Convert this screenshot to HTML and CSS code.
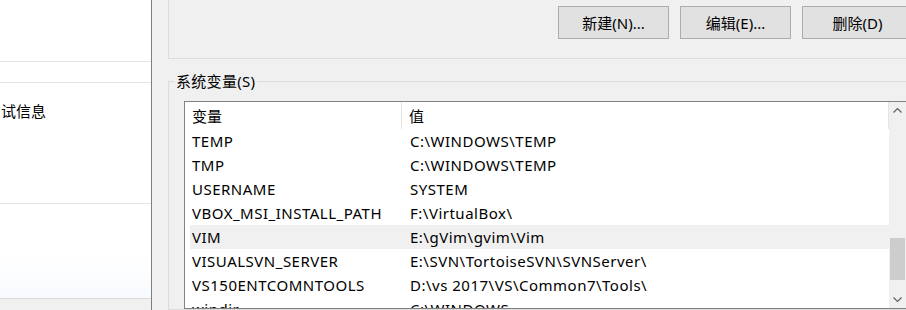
FILE: index.html
```html
<!DOCTYPE html>
<html lang="zh-CN">
<head>
    <meta charset="UTF-8">
    <title>环境变量</title>
    <link rel="stylesheet" href="styles.css">
</head>
<body>

    <div class="side">
        <div class="side-row first"></div>
        <div class="side-row second"></div>
        <div class="side-row third">试信息</div>
        <div class="side-row fourth"></div>
        <div class="side-foot"></div>
    </div>

    <div class="dialog">
        <div class="group user-group">
            <div class="buttons">
                <button class="btn">新建(N)...</button>
                <button class="btn">编辑(E)...</button>
                <button class="btn">删除(D)</button>
            </div>
        </div>

        <fieldset class="group sys-group">
            <legend>系统变量(S)</legend>
            <div class="listbox">
                <div class="list">
                    <div class="list-head">
                        <div class="col name">变量</div>
                        <div class="col value">值</div>
                    </div>
                    <div class="list-body">
                        <div class="item"><span>TEMP</span><span>C:\WINDOWS\TEMP</span></div>
                        <div class="item"><span>TMP</span><span>C:\WINDOWS\TEMP</span></div>
                        <div class="item"><span>USERNAME</span><span>SYSTEM</span></div>
                        <div class="item"><span>VBOX_MSI_INSTALL_PATH</span><span>F:\VirtualBox\</span></div>
                        <div class="item hover"><span>VIM</span><span>E:\gVim\gvim\Vim</span></div>
                        <div class="item"><span>VISUALSVN_SERVER</span><span>E:\SVN\TortoiseSVN\SVNServer\</span></div>
                        <div class="item"><span>VS150ENTCOMNTOOLS</span><span>D:\vs 2017\VS\Common7\Tools\</span></div>
                        <div class="item"><span>windir</span><span>C:\WINDOWS</span></div>
                    </div>
                </div>
                <div class="scrollbar">
                    <svg class="arrow" width="17" height="17" viewBox="0 0 17 17"><polyline points="4.5,10.5 8.5,6.5 12.5,10.5" fill="none" stroke="#606060" stroke-width="1.2"/></svg>
                    <div class="track">
                        <div class="thumb"></div>
                    </div>
                    <svg class="arrow" width="17" height="17" viewBox="0 0 17 17"><polyline points="4.5,6.5 8.5,10.5 12.5,6.5" fill="none" stroke="#606060" stroke-width="1.2"/></svg>
                </div>
            </div>
        </fieldset>
    </div>

</body>
</html>
```

FILE: styles.css
```css
/* General Reset */
* {
    margin: 0;
    padding: 0;
    box-sizing: border-box;
}

body {
    font-family: "Noto Sans", "Noto Sans CJK SC", sans-serif;
    font-size: 15px;
    color: #000;
    background-color: #f0f0f0;
    width: 906px;
    height: 310px;
    overflow: hidden;
    display: flex;
}

/* Left settings panel (cut off) */
.side {
    width: 152px;
    flex-shrink: 0;
    background-color: #fff;
    border-right: 1px solid #7f7f7f;
    display: flex;
    flex-direction: column;
}

.side-row {
    border-bottom: 1px solid #e3e3e3;
}

.side-row.first {
    height: 62px;
}

.side-row.second {
    height: 21px;
}

.side-row.third {
    height: 121px;
    padding: 18px 0 0 1px;
    line-height: 20px;
}

.side-row.fourth {
    height: 94px;
    background: linear-gradient(to bottom, #fff 0, #fff 55%, #f7fafd 100%);
    border-bottom: none;
}

.side-foot {
    flex: 1;
    border-top: 1px solid #dcdcdc;
    background-color: #f0f0f0;
}

/* Dialog area */
.dialog {
    flex: 1;
    padding-left: 16px;
    display: flex;
    flex-direction: column;
}

.group {
    border: 1px solid #dcdcdc;
    border-right: none;
}

.user-group {
    margin-top: -10px;
    height: 69px;
    border-top: none;
    padding-top: 16px;
}

.buttons {
    display: flex;
    gap: 11px;
    padding-left: 389px;
}

.btn {
    width: 111px;
    height: 33px;
    flex-shrink: 0;
    background-color: #e1e1e1;
    border: 1px solid #adadad;
    font-family: inherit;
    font-size: 15px;
    color: #000;
}

.sys-group {
    margin-top: 12px;
    padding: 10px 0 0 15px;
    min-width: 0;
    flex: 1;
}

.sys-group legend {
    margin-left: -10px;
    padding: 0 2px;
    line-height: 20px;
    letter-spacing: 0.3px;
}

/* List view */
.listbox {
    width: 723px;
    height: 208px;
    background-color: #fff;
    border: 1px solid #828282;
    display: flex;
    overflow: hidden;
}

.list {
    flex: 1;
    overflow: hidden;
}

.list-head {
    display: flex;
    height: 27px;
    line-height: 29px;
    border-right: 1px solid #e5e5e5;
}

.list-head .col {
    padding-left: 7px;
}

.list-head .name {
    width: 217px;
    border-right: 1px solid #e5e5e5;
}

.list-body {
    padding-left: 5px;
}

.item {
    display: grid;
    grid-template-columns: 218px 1fr;
    height: 24px;
    line-height: 25px;
    padding-left: 2px;
    white-space: nowrap;
    letter-spacing: 0.5px;
}

.item.hover {
    background-color: #f0f0f0;
}

/* Scroll bar */
.scrollbar {
    width: 17px;
    flex-shrink: 0;
    background-color: #f0f0f0;
    display: flex;
    flex-direction: column;
}

.arrow {
    display: block;
    height: 17px;
}

.track {
    flex: 1;
    padding-top: 119px;
}

.thumb {
    height: 42px;
    margin: 0 1px;
    background-color: #cdcdcd;
}
```
